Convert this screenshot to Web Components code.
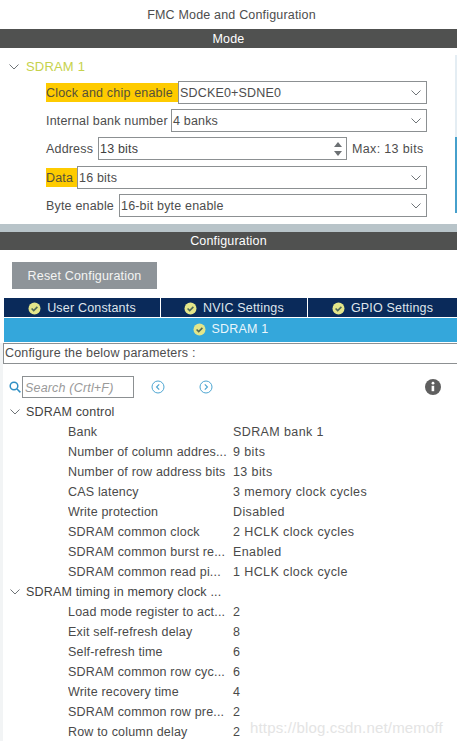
<!DOCTYPE html>
<html><head><meta charset="utf-8"><style>
html,body{margin:0;padding:0;background:#fff;overflow:hidden}
body{width:457px;height:746px;font:12.5px "Liberation Sans",Arial,sans-serif;color:#4d4d4d;letter-spacing:.18px}
</style></head><body>
<fmc-app></fmc-app>
<script>
const chevron=`<svg width="10" height="6" viewBox="0 0 10 6" fill="none" stroke="#6f7478" stroke-width="1"><path d="M.5 .5l4.5 4.5 4.5-4.5"/></svg>`;
const check=`<svg width="13" height="13" viewBox="0 0 13 13"><circle cx="6.5" cy="6.5" r="6" fill="#e3e68a"/><path d="M3.6 6.5l2.1 2.1 3.7-3.7" fill="none" stroke="#4f6a58" stroke-width="1.6"/></svg>`;
function def(name,html){customElements.define(name,class extends HTMLElement{constructor(){super();const r=this.attachShadow({mode:"open"});r.innerHTML=html;}})}

def("section-bar",`<style>:host{display:block;height:var(--h,19px);line-height:calc(var(--h,19px) + 1px);background:#505150;color:#fff;text-align:center;font-size:12.5px}</style><slot></slot>`);

def("mode-select",`<style>
:host{display:flex;align-items:center;height:23px}
.l{width:var(--lw);height:19px;line-height:21px;white-space:nowrap;flex:none}
:host([hl]) .l{background:#fecb00;color:#55503a}
.b{flex:1;height:21px;line-height:20px;border:1px solid #8c9092;padding-left:1px;display:flex;justify-content:space-between;align-items:center;background:#fff}
.c{margin-right:5px;display:flex}
</style><span class="l"><slot name="label"></slot></span><div class="b"><slot></slot><span class="c">${chevron}</span></div>`);

def("mode-spin",`<style>
:host{display:flex;align-items:center;height:23px}
.l{width:var(--lw);white-space:nowrap;flex:none;padding-top:1px}
.b{flex:none;width:246px;height:21px;line-height:20px;border:1px solid #8c9092;padding-left:1px;display:flex;justify-content:space-between;align-items:center;color:#404040}
.s{margin-right:3px;display:flex}
.m{margin-left:5px;white-space:nowrap;letter-spacing:.35px;padding-top:1px}
</style><span class="l"><slot name="label"></slot></span><div class="b"><slot></slot><svg class="s" width="10" height="16" viewBox="0 0 10 16" fill="#6c7073"><path d="M1 6l4-5 4 5z"/><path d="M1 10l4 5 4-5z"/></svg></div><span class="m"><slot name="max"></slot></span>`);

def("tab-head",`<style>
:host{display:flex;align-items:center;justify-content:center;gap:6px;height:18px;padding-top:1px;background:#0a2a5a;color:#dfe5ec;width:var(--w);flex:none;white-space:nowrap}
:host([active]){background:#34a7db;color:#eaf6fb;height:22px;padding:0 0 2px;flex:1}
svg{display:block}
</style>${check}<slot></slot>`);

def("tree-head",`<style>
:host{display:flex;align-items:center;height:18px;padding:2px 0 0 7px;gap:6px;color:#3f3f3f}
:host([accent]){color:#c6d24c;height:23px;padding:0 0 0 9px;font-size:13px;gap:7px}
</style>${chevron}<slot></slot>`);

def("tree-row",`<style>
:host{display:grid;grid-template-columns:165px 1fr;grid-template-rows:20px;height:20px;line-height:22px;padding-left:65px;color:#4a4a4a}
.k{overflow:hidden;white-space:nowrap}
.v{letter-spacing:.4px}
</style><span class="k"><slot name="k"></slot></span><span class="v"><slot></slot></span>`);

def("search-bar",`<style>
:host{display:flex;align-items:flex-start;height:25px;padding-left:6px}
.i{display:flex;margin:5px 1px 0 0}
.f{width:108px;height:20px;line-height:22px;border:1px solid #8c9092;padding-left:2px;font-style:italic;color:#9a9a9a}
.n{display:flex;gap:34px;margin:4px 0 0 17px}
.info{margin:3px 16px 0 auto;display:flex}
</style>
<svg class="i" width="12" height="12" viewBox="0 0 12 12" fill="none" stroke="#2f8fc4" stroke-width="1.5"><circle cx="5" cy="5" r="3.8"/><path d="M8 8l3.4 3.4"/></svg>
<div class="f"><slot></slot></div>
<div class="n">
<svg width="14" height="14" viewBox="0 0 14 14" fill="none" stroke="#4ea6d2"><circle cx="7" cy="7" r="6"/><path d="M8.2 4.4L5.6 7l2.6 2.6" stroke-width="1.2"/></svg>
<svg width="14" height="14" viewBox="0 0 14 14" fill="none" stroke="#4ea6d2"><circle cx="7" cy="7" r="6"/><path d="M5.8 4.4L8.4 7l-2.6 2.6" stroke-width="1.2"/></svg>
</div>
<svg class="info" width="16" height="16" viewBox="0 0 16 16"><circle cx="8" cy="8" r="8" fill="#5f5f5f"/><circle cx="8" cy="4.2" r="1.4" fill="#fff"/><path d="M6.6 6.8h2.6v5.4h-2.6z" fill="#fff"/></svg>`);

def("water-mark",`<style>:host{position:absolute;left:250px;top:719px;font-size:15px;color:#e4e4e4;letter-spacing:.17px;white-space:nowrap}</style><slot></slot>`);

def("fmc-app",`<style>
:host{display:block;width:457px;height:746px;position:relative;overflow:hidden}
.title{height:29px;line-height:30px;text-align:center;padding-left:6px;box-sizing:border-box;color:#4d4d4d}
.mode{height:176px;position:relative}
.scroll{position:absolute;right:0;top:7px;width:2px;height:158px;background:linear-gradient(#e4edf3 0,#e4edf3 52%,#46a0cc 52%,#46a0cc 100%)}
.sdram{padding-top:7px}
.fields{display:flex;flex-direction:column;gap:5px;padding:3px 30px 0 46px}
.shift{margin-top:1px}
.sep{height:8px;background:#b8c4c9}
.btnwrap{padding:12px 0 9px 12px}
.btn{width:145px;height:27px;line-height:28px;background:#8e9499;color:#f4f4f4;text-align:center}
.tabs{margin-left:4px;display:flex;gap:1px}
.lower{position:relative;background:#fff;padding-left:3px}
.strip{position:absolute;left:0;top:0;bottom:0;width:3px;background:#f2f4f5}
.params{height:19px;line-height:19px;border:1px solid #8c9092;border-right:0;padding-left:1px;margin-top:1px;color:#4d4d4d}
.lowerbody{margin-top:12px}
</style>
<div class="title">FMC Mode and Configuration</div>
<section-bar>Mode</section-bar>
<div class="mode"><div class="scroll"></div>
<div class="sdram"><tree-head accent>SDRAM 1</tree-head>
<div class="fields">
<mode-select hl style="--lw:132px"><span slot="label">Clock and chip enable</span>SDCKE0+SDNE0</mode-select>
<mode-select style="--lw:125px"><span slot="label">Internal bank number</span>4 banks</mode-select>
<mode-spin style="--lw:52px"><span slot="label">Address</span>13 bits<span slot="max">Max: 13 bits</span></mode-spin>
<mode-select class="shift" hl style="--lw:31px"><span slot="label">Data</span>16 bits</mode-select>
<mode-select style="--lw:73px"><span slot="label">Byte enable</span>16-bit byte enable</mode-select>
</div></div></div>
<div class="sep"></div>
<section-bar style="--h:18px">Configuration</section-bar>
<div class="btnwrap"><div class="btn">Reset Configuration</div></div>
<div class="tabs"><tab-head style="--w:156px">User Constants</tab-head><tab-head style="--w:146px">NVIC Settings</tab-head><tab-head style="--w:149px">GPIO Settings</tab-head></div>
<div class="tabs" style="margin-top:1px"><tab-head active>SDRAM 1</tab-head></div>
<div class="lower"><div class="strip"></div>
<div class="params">Configure the below parameters :</div>
<div class="lowerbody">
<search-bar>Search (Crtl+F)</search-bar>
<tree-head>SDRAM control</tree-head>
<tree-row><span slot="k">Bank</span>SDRAM bank 1</tree-row>
<tree-row><span slot="k">Number of column addres...</span>9 bits</tree-row>
<tree-row><span slot="k">Number of row address bits</span>13 bits</tree-row>
<tree-row><span slot="k">CAS latency</span>3 memory clock cycles</tree-row>
<tree-row><span slot="k">Write protection</span>Disabled</tree-row>
<tree-row><span slot="k">SDRAM common clock</span>2 HCLK clock cycles</tree-row>
<tree-row><span slot="k">SDRAM common burst re...</span>Enabled</tree-row>
<tree-row><span slot="k">SDRAM common read pi...</span>1 HCLK clock cycle</tree-row>
<tree-head>SDRAM timing in memory clock ...</tree-head>
<tree-row><span slot="k">Load mode register to act...</span>2</tree-row>
<tree-row><span slot="k">Exit self-refresh delay</span>8</tree-row>
<tree-row><span slot="k">Self-refresh time</span>6</tree-row>
<tree-row><span slot="k">SDRAM common row cyc...</span>6</tree-row>
<tree-row><span slot="k">Write recovery time</span>4</tree-row>
<tree-row><span slot="k">SDRAM common row pre...</span>2</tree-row>
<tree-row><span slot="k">Row to column delay</span>2</tree-row>
</div></div>
<water-mark>https://blog.csdn.net/memoff</water-mark>`);
</script></body></html>
